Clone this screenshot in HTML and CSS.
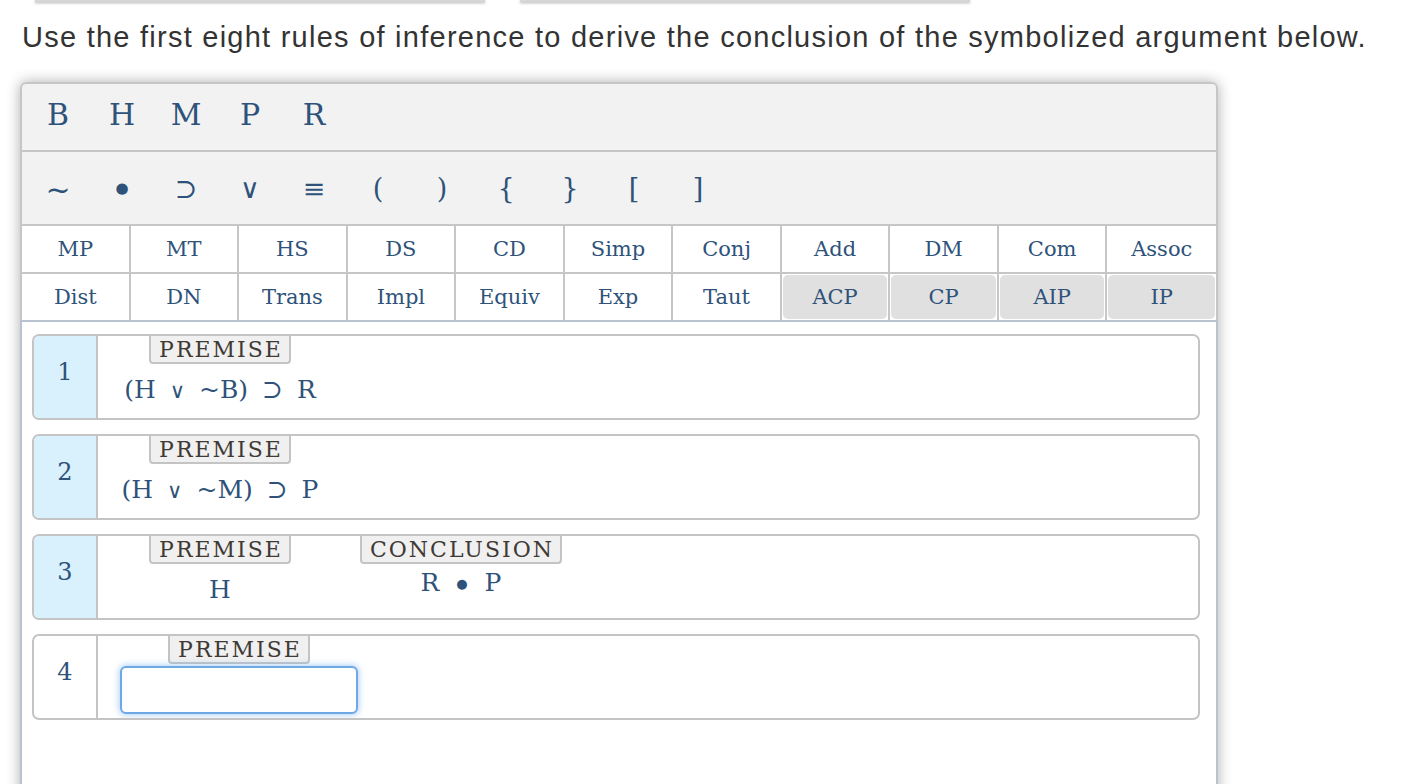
FILE: index.html
```html
<!DOCTYPE html>
<html lang="en">
<head>
  <meta charset="UTF-8">
  <title>Proof</title>
  <link rel="stylesheet" href="styles.css">
</head>
<body>
  <div class="tabs">
    <span class="tab"></span>
    <span class="tab"></span>
  </div>

  <p class="prompt">Use the first eight rules of inference to derive the conclusion of the symbolized argument below.</p>

  <div class="proof">
    <div class="toolbar">
      <div class="keys vars">
        <span class="key">B</span>
        <span class="key">H</span>
        <span class="key">M</span>
        <span class="key">P</span>
        <span class="key">R</span>
      </div>
      <div class="keys ops">
        <span class="key tilde">~</span>
        <span class="key dot">&#9679;</span>
        <span class="key">&#8835;</span>
        <span class="key wedge">&#8744;</span>
        <span class="key">&#8801;</span>
        <span class="key">(</span>
        <span class="key">)</span>
        <span class="key">{</span>
        <span class="key">}</span>
        <span class="key">[</span>
        <span class="key">]</span>
      </div>
      <div class="rules">
        <span class="rule">MP</span>
        <span class="rule">MT</span>
        <span class="rule">HS</span>
        <span class="rule">DS</span>
        <span class="rule">CD</span>
        <span class="rule">Simp</span>
        <span class="rule">Conj</span>
        <span class="rule">Add</span>
        <span class="rule">DM</span>
        <span class="rule">Com</span>
        <span class="rule">Assoc</span>
        <span class="rule">Dist</span>
        <span class="rule">DN</span>
        <span class="rule">Trans</span>
        <span class="rule">Impl</span>
        <span class="rule">Equiv</span>
        <span class="rule">Exp</span>
        <span class="rule">Taut</span>
        <span class="rule off"><b>ACP</b></span>
        <span class="rule off"><b>CP</b></span>
        <span class="rule off"><b>AIP</b></span>
        <span class="rule off"><b>IP</b></span>
      </div>
    </div>

    <div class="lines">
      <div class="line given">
        <div class="num">1</div>
        <div class="body">
          <div class="col">
            <span class="tag">PREMISE</span>
            <div class="wff">(H <span class="or">&#8744;</span> ~B) &#8835; R</div>
          </div>
        </div>
      </div>

      <div class="line given">
        <div class="num">2</div>
        <div class="body">
          <div class="col">
            <span class="tag">PREMISE</span>
            <div class="wff">(H <span class="or">&#8744;</span> ~M) &#8835; P</div>
          </div>
        </div>
      </div>

      <div class="line given">
        <div class="num">3</div>
        <div class="body">
          <div class="col">
            <span class="tag">PREMISE</span>
            <div class="wff">H</div>
          </div>
          <div class="col">
            <span class="tag">CONCLUSION</span>
            <div class="wff goal">R <span class="and">&#9679;</span> P</div>
          </div>
        </div>
      </div>

      <div class="line">
        <div class="num">4</div>
        <div class="body">
          <div class="col">
            <span class="tag">PREMISE</span>
            <input class="entry" type="text">
          </div>
        </div>
      </div>
    </div>
  </div>
</body>
</html>
```

FILE: styles.css
```css
body {
  margin: 0;
  background: #fff;
  font-family: "Liberation Sans", Arial, sans-serif;
  overflow: hidden;
}

.tabs {
  display: flex;
  gap: 35px;
  padding-left: 35px;
}
.tab {
  width: 450px;
  height: 2px;
  background: #d6d6d6;
  box-shadow: 0 1px 3px rgba(0,0,0,.35);
}

.prompt {
  margin: 18px 0 0 22px;
  font-size: 29px;
  line-height: 34px;
  letter-spacing: 1.25px;
  color: #333;
}

.proof {
  margin: 28px 0 0 20px;
  width: 1198px;
  border-radius: 6px 6px 0 0;
  box-shadow: 0 0 14px rgba(0,0,0,.32);
  background: #fff;
  font-family: "DejaVu Serif", "Liberation Serif", serif;
  color: #2e5279;
}

.toolbar {
  border: 2px solid #c6c6c6;
  border-bottom: 0;
  border-radius: 6px 6px 0 0;
  background: #f2f2f2;
}

.keys {
  display: flex;
  align-items: center;
  padding-left: 4px;
}
.key {
  width: 64px;
  text-align: center;
}
.vars {
  height: 68px;
  padding-bottom: 6px;
  box-sizing: border-box;
  font-size: 30px;
  border-bottom: 2px solid #c6c6c6;
}
.ops {
  height: 72px;
  font-size: 27px;
  border-bottom: 2px solid #c6c6c6;
}
.ops .tilde { font-size: 30px; padding-top: 2px; }
.ops .dot   { font-size: 15px; }
.ops .wedge { font-family: "DejaVu Sans", sans-serif; font-size: 27px; }

.rules {
  display: grid;
  grid-template-columns: repeat(11, 1fr);
  background: #fff;
}
.rule {
  display: flex;
  align-items: center;
  justify-content: center;
  height: 46px;
  font-size: 21px;
  border-right: 2px solid #c6c6c6;
  border-bottom: 2px solid #c6c6c6;
}
.rule:nth-child(11n) { border-right: 0; }
.rule:nth-child(n+12) { border-bottom: 0; }
.rule.off {
  padding: 1px;
  box-sizing: border-box;
}
.rule.off b {
  display: flex;
  align-items: center;
  justify-content: center;
  width: 100%;
  height: 100%;
  font-weight: normal;
  background: #e0e0e0;
  border-radius: 5px;
}

.lines {
  border: 2px solid #b9c3cf;
  border-bottom: 0;
  padding: 12px 16px 120px 10px;
  display: flex;
  flex-direction: column;
  gap: 14px;
}

.line {
  display: flex;
  height: 86px;
  box-sizing: border-box;
  border: 2px solid #c4c4c4;
  border-radius: 7px;
  overflow: hidden;
}
.num {
  width: 64px;
  flex: none;
  display: flex;
  align-items: center;
  justify-content: center;
  padding-bottom: 10px;
  box-sizing: border-box;
  border-right: 2px solid #c4c4c4;
  font-size: 24px;
}
.given .num { background: #d9f0fd; }

.body {
  display: flex;
  gap: 40px;
  padding-left: 22px;
}
.col {
  display: flex;
  flex-direction: column;
  align-items: center;
  min-width: 200px;
}

.tag {
  height: 26px;
  line-height: 27px;
  padding: 0 6px 0 8px;
  border: 2px solid #c4c4c4;
  border-top: 0;
  border-radius: 0 0 4px 4px;
  background: #f0f0f0;
  color: #403a36;
  font-size: 22px;
  letter-spacing: 2px;
}

.wff {
  margin-top: 11px;
  font-size: 25px;
  line-height: 30px;
  word-spacing: 6px;
  white-space: pre;
}
.wff .or  { font-family: "DejaVu Sans", sans-serif; font-size: 21px; }
.wff .and { font-size: 13px; vertical-align: 3px; }
.wff.goal { margin-top: 4px; word-spacing: 9px; }

.entry {
  margin-top: 2px;
  width: 238px;
  height: 48px;
  box-sizing: border-box;
  border: 2px solid #6ea9e6;
  border-radius: 6px;
  box-shadow: 0 0 6px 1px rgba(110,170,240,.55);
  outline: none;
  font: inherit;
}
```
